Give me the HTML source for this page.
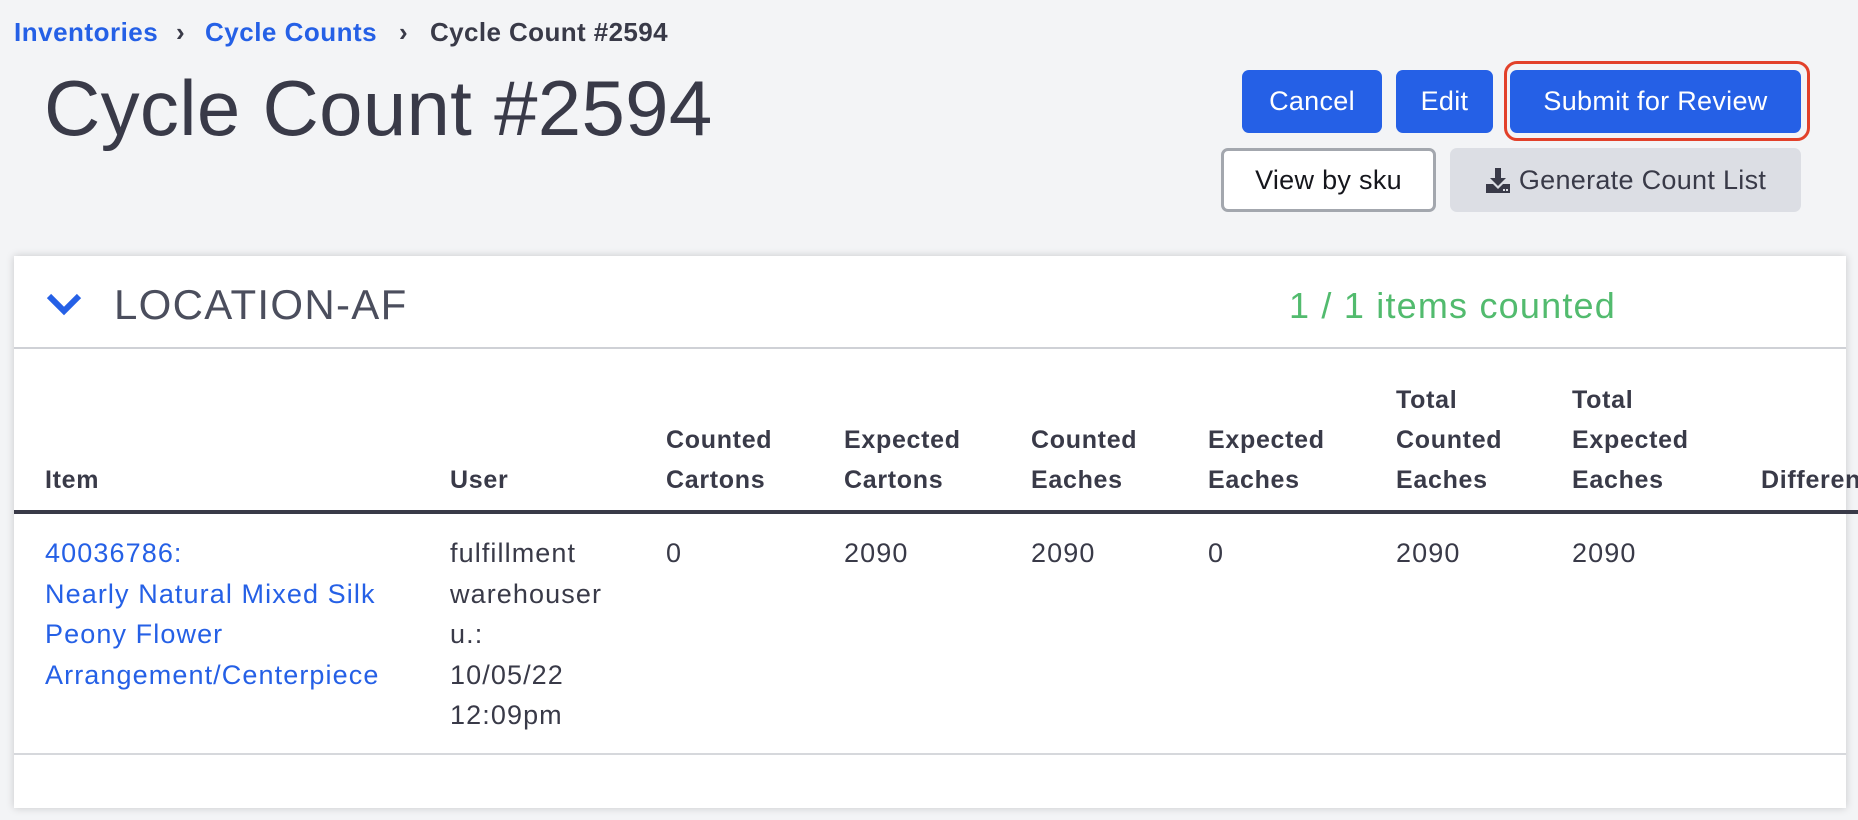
<!DOCTYPE html>
<html><head><meta charset="utf-8"><style>
*{margin:0;padding:0;box-sizing:border-box}
body{width:1858px;height:820px;background:#f3f4f6;font-family:"Liberation Sans",sans-serif;color:#393a48;position:relative;overflow:hidden}
.a{position:absolute;white-space:nowrap}
.bc{font-size:26px;font-weight:bold;top:17px}
.blue{color:#2560e6}
.btn{position:absolute;border-radius:7px;font-size:27px;display:flex;align-items:center;justify-content:center;letter-spacing:0.3px}
.pb{background:#2560e6;color:#fff}
.card{position:absolute;left:14px;top:256px;width:1832px;height:552px;background:#fff;box-shadow:0 0 8px rgba(0,0,0,.18)}
.th{font-size:25px;font-weight:bold;line-height:40px;position:absolute;letter-spacing:0.7px}
.td{font-size:27px;line-height:40.5px;position:absolute;top:533px;letter-spacing:1.1px}
</style></head><body>
<div class="a bc blue" style="left:14px;letter-spacing:0.5px">Inventories</div>
<div class="a bc" style="left:176px">›</div>
<div class="a bc blue" style="left:205px;letter-spacing:0.5px">Cycle Counts</div>
<div class="a bc" style="left:399px">›</div>
<div class="a bc" style="left:430px;letter-spacing:0.4px">Cycle Count #2594</div>
<div class="a" style="left:44px;top:63px;font-size:78px;letter-spacing:0.3px">Cycle Count #2594</div>

<div class="btn pb" style="left:1242px;top:70px;width:140px;height:63px">Cancel</div>
<div class="btn pb" style="left:1396px;top:70px;width:97px;height:63px">Edit</div>
<div class="a" style="left:1504px;top:61px;width:306px;height:80px;border:3px solid #e2412a;border-radius:13px"></div>
<div class="btn pb" style="left:1510px;top:70px;width:291px;height:63px">Submit for Review</div>
<div class="btn" style="left:1221px;top:148px;width:215px;height:64px;background:#fff;border:3px solid #a3a7ae;color:#15161c">View by sku</div>
<div class="btn" style="left:1450px;top:148px;width:351px;height:64px;background:#dcdee4;color:#393a48"><svg width="26" height="28" viewBox="0 0 26 28" style="margin-right:8px"><path d="M10 2h6v10h5l-8 8-8-8h5z" fill="#393a48"/><path d="M1 18h7l5 5 5-5h7v9H1z" fill="#393a48"/><rect x="18" y="23" width="2" height="2" fill="#dcdee4"/><rect x="21" y="23" width="2" height="2" fill="#dcdee4"/></svg>Generate Count List</div>

<div class="card">
 <svg class="a" style="left:31px;top:36px" width="38" height="24" viewBox="0 0 38 24"><path d="M4 4l15 15 15-15" fill="none" stroke="#2560e6" stroke-width="6"/></svg>
 <div class="a" style="left:100px;top:25px;font-size:42px;color:#4b4e5d;letter-spacing:1.3px">LOCATION-AF</div>
 <div class="a" style="left:1275px;top:29px;font-size:36px;color:#52bb6e;letter-spacing:1.2px">1 / 1 items counted</div>
 <div class="a" style="left:0;top:91px;width:1832px;height:2px;background:#cfd1d6"></div>
 <div class="a" style="left:0;top:254px;width:1844px;height:4px;background:#393a48"></div>
 <div class="a" style="left:0;top:497px;width:1832px;height:2px;background:#d6d8dc"></div>
</div>
<div style="position:absolute;left:0;top:0">
<div class="th" style="left:45px;top:460px">Item</div>
<div class="th" style="left:450px;top:460px">User</div>
<div class="th" style="left:666px;top:420px">Counted<br>Cartons</div>
<div class="th" style="left:844px;top:420px">Expected<br>Cartons</div>
<div class="th" style="left:1031px;top:420px">Counted<br>Eaches</div>
<div class="th" style="left:1208px;top:420px">Expected<br>Eaches</div>
<div class="th" style="left:1396px;top:380px">Total<br>Counted<br>Eaches</div>
<div class="th" style="left:1572px;top:380px">Total<br>Expected<br>Eaches</div>
<div class="th" style="left:1761px;top:460px">Difference</div>
<div class="td blue" style="left:45px">40036786:<br>Nearly Natural Mixed Silk<br>Peony Flower<br>Arrangement/Centerpiece</div>
<div class="td" style="left:450px">fulfillment<br>warehouser<br>u.:<br>10/05/22<br>12:09pm</div>
<div class="td" style="left:666px">0</div>
<div class="td" style="left:844px">2090</div>
<div class="td" style="left:1031px">2090</div>
<div class="td" style="left:1208px">0</div>
<div class="td" style="left:1396px">2090</div>
<div class="td" style="left:1572px">2090</div>
</div>
</body></html>
